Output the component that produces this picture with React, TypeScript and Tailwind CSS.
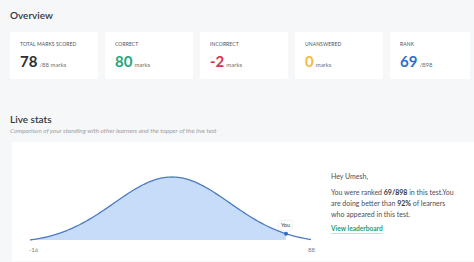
const stats = [
  { label: 'TOTAL MARKS SCORED', value: '78', unit: '/88 marks', color: 'text-[#2b2f36]' },
  { label: 'CORRECT', value: '80', unit: 'marks', color: 'text-[#1fa67a]' },
  { label: 'INCORRECT', value: '-2', unit: 'marks', color: 'text-[#d8324c]' },
  { label: 'UNANSWERED', value: '0', unit: 'marks', color: 'text-[#f5b942]' },
  { label: 'RANK', value: '69', unit: '/898', color: 'text-[#2f6fcb]' },
];

// bell curve across the chart, svg coords
const X0 = 18;
const X1 = 299;
const MEAN = 160;
const BASE = 98;
const PEAK = 63;
const SIG = 58;
const YOU_X = 274;

function g(x: number) {
  return Math.exp(-((x - MEAN) ** 2) / (2 * SIG * SIG));
}
const g0 = g(X0);
function y(x: number) {
  return BASE - (PEAK * (g(x) - g0)) / (1 - g0);
}
function curve(from: number, to: number) {
  const pts: string[] = [];
  for (let x = from; x <= to; x += 2) pts.push(`${x},${y(x).toFixed(2)}`);
  pts.push(`${to},${y(to).toFixed(2)}`);
  return 'M' + pts.join(' L');
}

function BellChart() {
  const line = curve(X0, X1);
  const area = curve(X0, YOU_X) + ` L${YOU_X},${BASE} L${X0},${BASE} Z`;
  return (
    <svg width="310" height="117" viewBox="0 0 310 117" className="block">
      <path d={area} fill="#c7dcf8" />
      <path d={line} fill="none" stroke="#4d7bc3" strokeWidth="1.3" />
      <circle cx={YOU_X} cy={y(YOU_X)} r="2" fill="#3169c4" />
      <text x="17" y="110" fontSize="6" fill="#7a7f87" fontFamily="Lato, sans-serif">-16</text>
      <text x="296" y="110" fontSize="6" fill="#7a7f87" fontFamily="Lato, sans-serif">88</text>
    </svg>
  );
}

export default function App() {
  return (
    <div className="relative w-[474px] h-[262px] overflow-hidden bg-[#f6f7f9] font-['Lato',sans-serif] text-[#2b2f36]">
      <section className="pl-[10px] pt-[9px]">
        <h2 className="text-[10px] leading-[12px] font-semibold text-[#33373d]">Overview</h2>
        <div className="mt-[11px] flex gap-[7px] w-[460px] overflow-hidden">
          {stats.map((s) => (
            <div key={s.label} className="flex-none w-[88px] h-[47px] bg-white rounded-[2px] pl-[10px] pt-[9px]">
              <p className="text-[5px] leading-[6px] tracking-[0.1px] text-[#4b5058]">{s.label}</p>
              <p className="mt-[7px] flex items-baseline gap-[2px]">
                <span className={`text-[15px] leading-[15px] font-bold ${s.color}`}>{s.value}</span>
                <span className="text-[6px] text-[#6b7078]">{s.unit}</span>
              </p>
            </div>
          ))}
        </div>
      </section>

      <section className="mt-[34px] pl-[10px]">
        <h2 className="text-[10px] leading-[12px] font-semibold text-[#33373d]">Live stats</h2>
        <p className="mt-[2px] text-[6.4px] leading-[8px] italic text-[#9a9fa6]">
          Comparison of your standing with other learners and the topper of the live test
        </p>
      </section>

      <div className="mt-[7px] ml-[12px] h-[119px] bg-white flex">
        <div className="relative w-[310px] flex-none">
          <BellChart />
          <div className="absolute left-[267px] top-[79px] bg-white px-[2px] py-[1px] text-[5.5px] leading-[7px] text-[#33373d] shadow-[0_0_2px_rgba(0,0,0,0.2)] rounded-[1px]">
            You
          </div>
        </div>
        <div className="pl-[9px] pt-[29px] text-[7px] leading-[11px] text-[#4a4f57]">
          <p className="leading-[11px]">Hey Umesh,</p>
          <p className="mt-[5px] w-[125px] leading-[11px]">
            You were ranked <span className="font-bold text-[#33373d]">69/898</span> in this test.You are doing better
            than <span className="font-bold text-[#33373d]">92%</span> of learners who appeared in this test.
          </p>
          <p className="mt-[3px]">
            <span className="inline-block font-bold text-[6.6px] text-[#1f9b6d] border-b border-[#bfe5d5] leading-[10px]">
              View leaderboard
            </span>
          </p>
        </div>
      </div>
    </div>
  );
}
